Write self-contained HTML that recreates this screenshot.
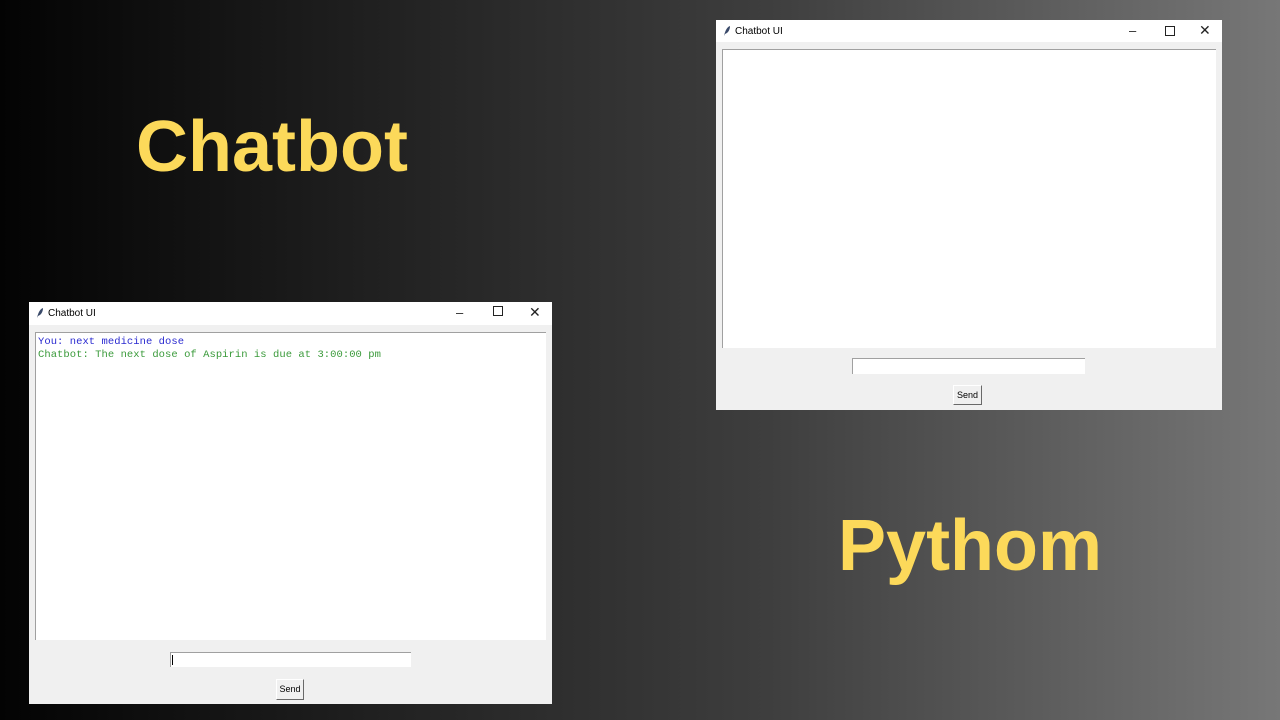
<!DOCTYPE html>
<html><head><style>
body{margin:0;width:1280px;height:720px;overflow:hidden;position:relative;background:linear-gradient(90deg,#030303 0%,#262626 35%,#3e3e3e 60%,#777 100%);font-family:"Liberation Sans",sans-serif}
.h{position:absolute;color:#fcd95a;font-weight:bold;font-size:72px;line-height:1;margin:0}
.win{position:absolute;background:#f0f0f0}
.tb{position:absolute;left:0;right:0;top:0;height:23px;background:#fff;font-size:10px;color:#000}
.tb .t{position:absolute;left:19px;top:6px}
.tb .ic{position:absolute;left:7px;top:5px}
.ctl{position:absolute;top:3px;font-size:13px;color:#222}
.ta{position:absolute;background:#fff;border-top:1px solid #a0a0a0;border-left:1px solid #a0a0a0}
.en{position:absolute;background:#fff;border-top:1px solid #a0a0a0;border-left:1px solid #a0a0a0}
.btn{position:absolute;background:#f0f0f0;border:1px solid #fff;border-right-color:#696969;border-bottom-color:#696969;font-size:9px;text-align:center;line-height:18px;box-sizing:border-box}
.m{font-family:"Liberation Mono",monospace;font-size:10.5px;letter-spacing:0.05px;line-height:13px;position:absolute;left:2px;top:3px;white-space:pre}
</style></head><body>
<div class="h" style="left:136px;top:111px">Chatbot</div>
<div class="h" style="left:838px;top:510px">Pythom</div>

<div class="win" style="left:29px;top:302px;width:523px;height:402px">
 <div class="tb"><svg class="ic" width="8" height="12" viewBox="0 0 8 12"><path d="M1 11 C2 6 4 2 7 1 C7 5 5 8 2 9 Z" fill="#3a4a6a"/></svg><span class="t">Chatbot UI</span>
  <span class="ctl" style="left:427px">–</span><span class="ctl" style="left:464px;top:4px;width:8px;height:8px;border:1px solid #222;font-size:0"></span><span class="ctl" style="left:500px;top:2px;font-size:14px">✕</span></div>
 <div class="ta" style="left:6px;top:30px;width:510px;height:307px">
  <div class="m"><span style="color:#2a2ad0">You: next medicine dose</span>
<span style="color:#3a9a3a">Chatbot: The next dose of Aspirin is due at 3:00:00 pm</span></div></div>
 <div class="en" style="left:141px;top:350px;width:240px;height:14px"><div style="position:absolute;left:1px;top:2px;width:1px;height:10px;background:#000"></div></div>
 <div class="btn" style="left:247px;top:377px;width:28px;height:21px">Send</div>
</div>

<div class="win" style="left:716px;top:20px;width:506px;height:390px">
 <div class="tb" style="height:22px"><svg class="ic" width="8" height="12" viewBox="0 0 8 12"><path d="M1 11 C2 6 4 2 7 1 C7 5 5 8 2 9 Z" fill="#3a4a6a"/></svg><span class="t">Chatbot UI</span>
  <span class="ctl" style="left:413px">–</span><span class="ctl" style="left:449px;top:6px;width:8px;height:8px;border:1px solid #222;font-size:0"></span><span class="ctl" style="left:483px;top:2px;font-size:14px">✕</span></div>
 <div class="ta" style="left:6px;top:29px;width:493px;height:298px"></div>
 <div class="en" style="left:136px;top:338px;width:232px;height:15px"></div>
 <div class="btn" style="left:237px;top:365px;width:29px;height:20px">Send</div>
</div>
</body></html>
